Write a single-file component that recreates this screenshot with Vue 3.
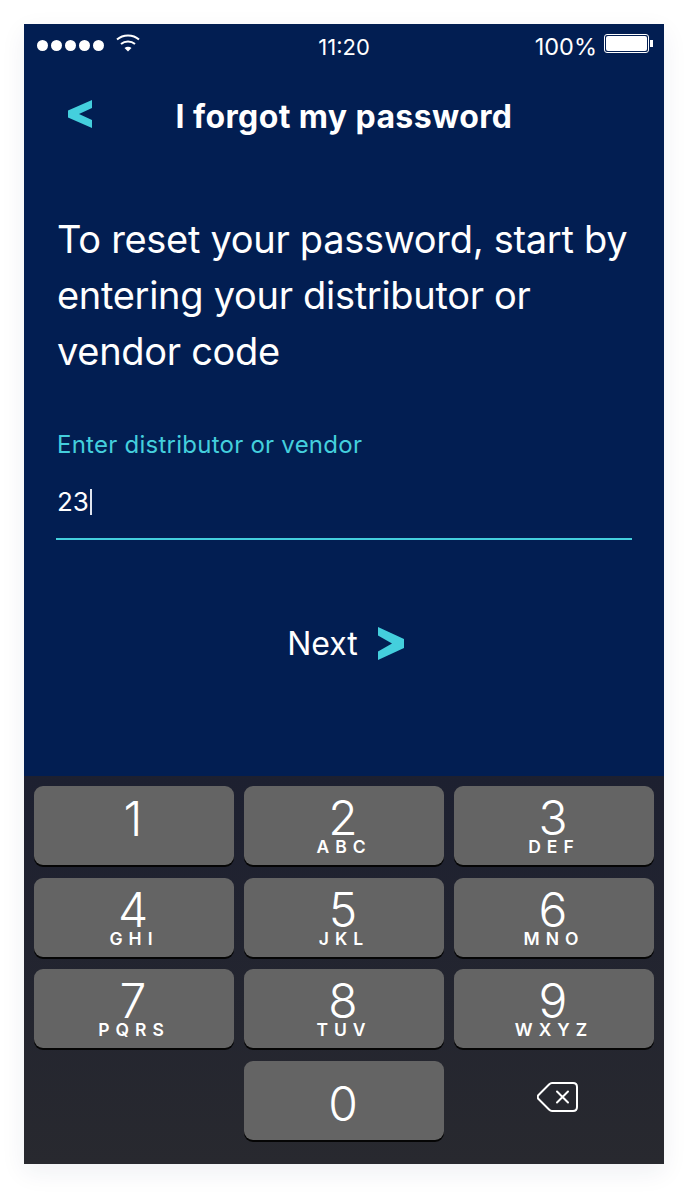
<script setup>
const keys = [
  { n: '1', l: '' }, { n: '2', l: 'ABC' }, { n: '3', l: 'DEF' },
  { n: '4', l: 'GHI' }, { n: '5', l: 'JKL' }, { n: '6', l: 'MNO' },
  { n: '7', l: 'PQRS' }, { n: '8', l: 'TUV' }, { n: '9', l: 'WXYZ' },
]
</script>

<template>
  <div class="page">
    <div class="phone">
      <div class="main">
        <div class="status">
          <div class="status-left">
            <div class="dots"><i v-for="d in 5" :key="d"></i></div>
            <svg class="wifi" width="24" height="19" viewBox="0 0 24 19" fill="none" stroke="#fff" stroke-width="2">
              <path d="M1 6.500C7 1 17 1 23 6.500" />
              <path d="M5 11C9 7.500 15 7.500 19 11" />
              <path d="M8.500 15L12 18.500L15.500 15C13.500 13.200 10.500 13.200 8.500 15Z" fill="#fff" stroke="none" />
            </svg>
          </div>
          <div class="time">11:20</div>
          <div class="status-right">
            <span>100%</span>
            <div class="battery"><b></b></div>
            <div class="nub"></div>
          </div>
        </div>
        <div class="nav">
          <svg class="back" width="24" height="28" viewBox="0 0 24 28"><path d="M24 0V8L11 14L24 20V28L0 17.500V10.500Z" fill="#44cfdd" /></svg>
          <h1>I forgot my password</h1>
        </div>
        <p class="lead">To reset your password, start by entering your distributor or vendor code</p>
        <label class="label">Enter distributor or vendor</label>
        <div class="field">23<span class="caret"></span></div>
        <div class="next">
          <span>Next</span>
          <svg width="26" height="33" viewBox="0 0 26 33"><path d="M0 0L26 12V21L0 33V24.500L14 16.500L0 8.500Z" fill="#44cfdd" /></svg>
        </div>
      </div>
      <div class="keyboard">
        <div v-for="k in keys" :key="k.n" class="key" :class="{ solo: !k.l }">
          <span class="num">{{ k.n }}</span>
          <span v-if="k.l" class="letters">{{ k.l }}</span>
        </div>
        <div></div>
        <div class="key solo zero"><span class="num">0</span></div>
        <div class="del">
          <svg width="42" height="32" viewBox="0 0 42 32" fill="none" stroke="#fff" stroke-width="2" stroke-linejoin="round" stroke-linecap="round">
            <path d="M15 2H36C38.500 2 40 3.500 40 6V26C40 28.500 38.500 30 36 30H15C14 30 13 29.500 12 28.500L1.500 18C0.500 17 0.500 15 1.500 14L12 3.500C13 2.500 14 2 15 2Z" />
            <path d="M20 10.500L31 21.500M31 10.500L20 21.500" />
          </svg>
        </div>
      </div>
    </div>
  </div>
</template>

<style scoped>
.page {
  width: 688px;
  height: 1192px;
  box-sizing: border-box;
  padding: 24px;
  background: #fff;
}
.phone {
  width: 640px;
  height: 1140px;
  display: flex;
  flex-direction: column;
  box-shadow: 0 8px 24px rgba(30, 40, 90, 0.07);
  color: #fff;
  font-family: Inter, "Noto Sans", sans-serif;
}
.main {
  height: 752px;
  flex: none;
  background: #021e52;
  display: flex;
  flex-direction: column;
}
.status {
  height: 42px;
  padding: 0 11px 0 13px;
  display: grid;
  grid-template-columns: 1fr auto 1fr;
  align-items: center;
}
.status-left {
  display: flex;
  align-items: center;
  gap: 12px;
}
.dots {
  display: flex;
  gap: 3px;
}
.dots i {
  width: 11px;
  height: 11px;
  border-radius: 50%;
  background: #fff;
}
.wifi {
  margin-top: -6px;
}
.time {
  font-size: 22px;
  font-weight: 400;
  padding: 3px 2px 0 0;
}
.status-right {
  display: flex;
  justify-content: flex-end;
  align-items: center;
  font-size: 23.5px;
  font-weight: 400;
}
.status-right span {
  padding-top: 3px;
}
.battery {
  width: 45px;
  height: 19px;
  box-sizing: border-box;
  margin-left: 7px;
  margin-top: -4px;
  padding: 1px;
  border: 1px solid #fff;
  border-radius: 3px;
}
.battery b {
  display: block;
  height: 100%;
  background: #fff;
  border-radius: 2px;
}
.nub {
  width: 3px;
  height: 7px;
  margin: -4px 0 0 1px;
  background: #fff;
}
.nav {
  height: 64px;
  margin-top: 18px;
  position: relative;
  display: flex;
  align-items: center;
  justify-content: center;
}
.back {
  position: absolute;
  left: 44px;
  top: 16px;
}
h1 {
  margin: 0;
  font-size: 32px;
  font-weight: 700;
  letter-spacing: 0.4px;
}
.lead {
  margin: 63px 0 0;
  padding: 0 32px 0 33px;
  font-size: 38px;
  line-height: 56px;
  font-weight: 400;
  letter-spacing: -0.3px;
}
.label {
  margin: 50px 0 0 33px;
  font-size: 24px;
  line-height: 32px;
  letter-spacing: 0.25px;
  color: #44cfdd;
}
.field {
  margin: 19px 32px 0 32px;
  height: 60px;
  box-sizing: border-box;
  padding: 4px 0 0 1px;
  font-size: 26px;
  line-height: 36px;
  border-bottom: 2px solid #44cfdd;
  display: flex;
}
.caret {
  width: 2px;
  height: 26px;
  margin: 5px 0 0 1px;
  background: #dfe4ee;
}
.next {
  margin-top: 87px;
  padding-left: 3px;
  display: flex;
  justify-content: center;
  align-items: center;
  gap: 20px;
  font-size: 32px;
  height: 32px;
}
.keyboard {
  flex: 1;
  box-sizing: border-box;
  padding: 10px 10px 24px;
  background: linear-gradient(#1d2030, #28292f);
  display: grid;
  grid-template-columns: repeat(3, 200px);
  grid-auto-rows: 79px;
  column-gap: 10px;
  row-gap: 12.67px;
}
.key {
  background: #646464;
  border-radius: 9px;
  box-shadow: 0 2px 0 #050505;
  display: flex;
  flex-direction: column;
  align-items: center;
  position: relative;
}
.num {
  font-size: 48px;
  line-height: 36px;
  font-weight: 300;
  margin-top: 14px;
  margin-left: -2px;
}
.solo .num {
  margin-top: 15px;
}
.zero .num {
  margin-top: 25px;
}
.letters {
  position: absolute;
  top: 54px;
  left: 0;
  right: 0;
  text-align: center;
  font-size: 17.5px;
  line-height: 14px;
  font-weight: 600;
  letter-spacing: 6px;
}
.del {
  display: flex;
  justify-content: center;
  align-items: center;
  padding-bottom: 6px;
  padding-left: 8px;
}
</style>

<style>
html, body { margin: 0; background: #fff; }
</style>
